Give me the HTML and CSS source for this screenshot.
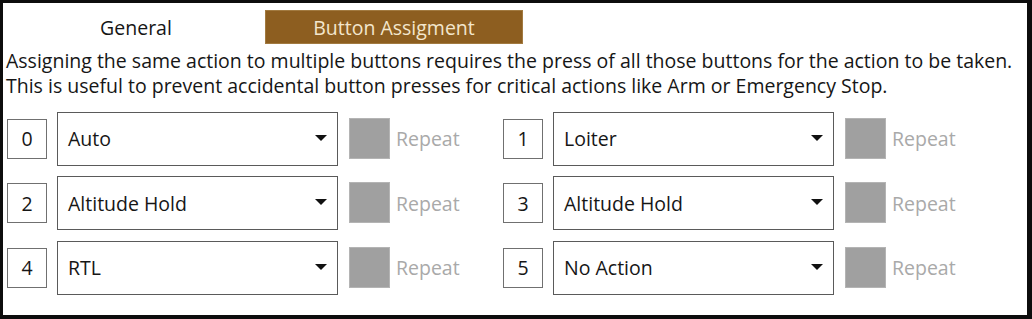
FILE: index.html
```html
<!DOCTYPE html>
<html>
  <head>
    <meta charset="utf-8">
    <title>Joystick</title>
    <link rel="stylesheet" href="styles.css">
  </head>
  <body>
    <div class="panel">
      <div class="tabs">
        <div class="tab">General</div>
        <div class="tab active">Button Assigment</div>
      </div>
      <div class="info">
        Assigning the same action to multiple buttons requires the press of all those buttons for the action to be taken.<br>
        This is useful to prevent accidental button presses for critical actions like Arm or Emergency Stop.
      </div>
      <div class="buttons">
        <div class="row">
          <div class="num">0</div>
          <div class="combo"><span>Auto</span><i class="arrow"></i></div>
          <div class="check"></div>
          <div class="repeat">Repeat</div>
        </div>
        <div class="row">
          <div class="num">1</div>
          <div class="combo"><span>Loiter</span><i class="arrow"></i></div>
          <div class="check"></div>
          <div class="repeat">Repeat</div>
        </div>
        <div class="row">
          <div class="num">2</div>
          <div class="combo"><span>Altitude Hold</span><i class="arrow"></i></div>
          <div class="check"></div>
          <div class="repeat">Repeat</div>
        </div>
        <div class="row">
          <div class="num">3</div>
          <div class="combo"><span>Altitude Hold</span><i class="arrow"></i></div>
          <div class="check"></div>
          <div class="repeat">Repeat</div>
        </div>
        <div class="row">
          <div class="num">4</div>
          <div class="combo"><span>RTL</span><i class="arrow"></i></div>
          <div class="check"></div>
          <div class="repeat">Repeat</div>
        </div>
        <div class="row">
          <div class="num">5</div>
          <div class="combo"><span>No Action</span><i class="arrow"></i></div>
          <div class="check"></div>
          <div class="repeat">Repeat</div>
        </div>
      </div>
    </div>
  </body>
</html>
```

FILE: styles.css
```css
* {
  box-sizing: border-box;
}
body {
  margin: 0;
  background: #fff;
  font-family: "Open Sans", "Noto Sans", sans-serif;
  font-size: 19.5px;
  color: #161616;
}
.panel {
  width: 1032px;
  height: 319px;
  border-style: solid;
  border-color: #0d0d0d;
  border-width: 3px 5px 4px 3px;
  padding: 7px 0 0 3px;
  overflow: hidden;
}
.tabs {
  display: flex;
  padding-left: 1px;
  height: 34px;
}
.tab {
  width: 258px;
  display: flex;
  align-items: center;
  justify-content: center;
  line-height: 1;
  padding-top: 1px;
}
.tab.active {
  background: #8d5e20;
  color: #f3e6cc;
  border: 1px solid #a27a40;
}
.info {
  margin-top: 4px;
  line-height: 25px;
}
.buttons {
  margin-top: 13.5px;
  padding-left: 1px;
  display: grid;
  grid-template-columns: 496px 496px;
  row-gap: 10.5px;
}
.row {
  display: flex;
  align-items: center;
  height: 54px;
}
.num {
  width: 40px;
  height: 40px;
  border: 1px solid #707070;
  display: flex;
  align-items: center;
  justify-content: center;
}
.combo {
  width: 281px;
  height: 54px;
  margin-left: 10px;
  border: 1px solid #5a5a5a;
  display: flex;
  align-items: center;
  justify-content: space-between;
  padding: 0 10px 0 10px;
}
.arrow {
  width: 0;
  height: 0;
  border-left: 6px solid transparent;
  border-right: 6px solid transparent;
  border-top: 6px solid #111;
  margin-top: -2px;
}
.check {
  width: 41px;
  height: 41px;
  margin-left: 11px;
  margin-top: -1px;
  background: #a0a0a0;
  border: 1px solid #b4b4b4;
}
.repeat {
  margin-left: 6px;
  color: #a9a9a9;
}
```
